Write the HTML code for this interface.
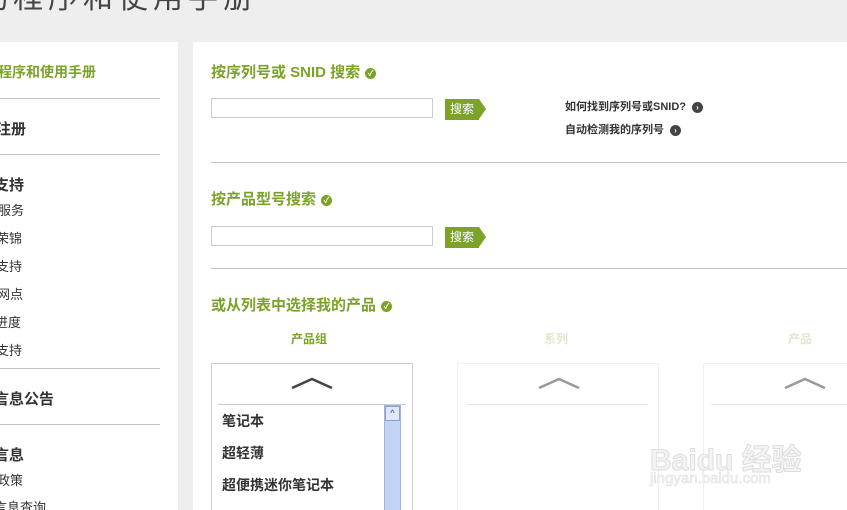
<!DOCTYPE html>
<html style="overflow:hidden;width:847px;height:510px"><head><meta charset="utf-8"><style>
*{margin:0;padding:0;box-sizing:border-box}
body{width:847px;height:510px;overflow:hidden;background:#fff;font-family:"Liberation Sans","Noto Sans CJK SC",sans-serif;position:relative}
.a{position:absolute;white-space:nowrap}
.hd{left:0;top:0;width:847px;height:42px;background:#eeeeee}
.ht{left:-22px;top:-27px;font-size:30px;color:#444;letter-spacing:5px}
.strip{left:178px;top:42px;width:15px;height:468px;background:#eeeeee}
.ln{height:1px;background:#c4c4c4}
.g{color:#7aa328;font-weight:bold}
.ck{display:inline-block;width:11px;height:11px;border-radius:50%;background:#7aa328;color:#fff;font-size:8px;line-height:11px;text-align:center;vertical-align:1px;margin-left:5px}
.dk{display:inline-block;width:11px;height:11px;border-radius:50%;background:#444;color:#fff;font-size:8px;line-height:11px;text-align:center;margin-left:6px;vertical-align:0}
.in{width:222px;height:20px;border:1px solid #ccc;background:#fff}
.btn{width:34px;height:21px;background:#7aa328;color:#fff;font-size:12px;line-height:21px;padding-left:5px}
.btn:after{content:"";position:absolute;left:34px;top:0;border-left:7px solid #7aa328;border-top:10.5px solid transparent;border-bottom:10.5px solid transparent}
.s{font-size:13px;color:#333}
.b{font-size:15px;font-weight:bold;color:#333}
.box{border:1px solid #ccc;width:202px;height:147px;border-bottom:none}
</style></head><body>
<div class="a hd"></div>
<div class="a ht">动程序和使用手册</div>
<div class="a strip"></div>

<div class="a g" style="left:-2px;top:62px;font-size:14px">程序和使用手册</div>
<div class="a ln" style="left:0;top:98px;width:160px"></div>
<div class="a b" style="left:-4px;top:118px">注册</div>
<div class="a ln" style="left:0;top:154px;width:160px"></div>
<div class="a b" style="left:-6px;top:174px">支持</div>
<div class="a s" style="left:-2px;top:200px">服务</div>
<div class="a s" style="left:-4px;top:228px">荣锦</div>
<div class="a s" style="left:-4px;top:256px">支持</div>
<div class="a s" style="left:-3px;top:284px">网点</div>
<div class="a s" style="left:-5px;top:312px">进度</div>
<div class="a s" style="left:-4px;top:340px">支持</div>
<div class="a ln" style="left:0;top:368px;width:160px"></div>
<div class="a b" style="left:-6px;top:388px">言息公告</div>
<div class="a ln" style="left:0;top:424px;width:160px"></div>
<div class="a b" style="left:-6px;top:444px">言息</div>
<div class="a s" style="left:-3px;top:470px">政策</div>
<div class="a s" style="left:-6px;top:497px">言息查询</div>

<div class="a g" style="left:211px;top:61px;font-size:15px">按序列号或 SNID 搜索<span class="ck">✓</span></div>
<div class="a in" style="left:211px;top:98px"></div>
<div class="a btn" style="left:445px;top:99px">搜索</div>
<div class="a" style="left:565px;top:98px;font-size:11px;font-weight:bold;color:#333">如何找到序列号或SNID?<span class="dk">›</span></div>
<div class="a" style="left:565px;top:121px;font-size:11px;font-weight:bold;color:#333">自动检测我的序列号<span class="dk">›</span></div>
<div class="a ln" style="left:211px;top:162px;width:636px"></div>

<div class="a g" style="left:211px;top:188px;font-size:15px">按产品型号搜索<span class="ck">✓</span></div>
<div class="a in" style="left:211px;top:226px"></div>
<div class="a btn" style="left:445px;top:227px">搜索</div>
<div class="a ln" style="left:211px;top:268px;width:636px"></div>

<div class="a g" style="left:211px;top:294px;font-size:15px">或从列表中选择我的产品<span class="ck">✓</span></div>
<div class="a g" style="left:291px;top:330px;font-size:12px">产品组</div>
<div class="a" style="left:544px;top:330px;font-size:12px;color:#dfe8cc;font-weight:bold">系列</div>
<div class="a" style="left:788px;top:330px;font-size:12px;color:#dfe8cc;font-weight:bold">产品</div>

<div class="a box" style="left:211px;top:363px"></div>
<svg class="a" style="left:290px;top:376px" width="44" height="14"><polyline points="2,12 22,3 42,12" fill="none" stroke="#444" stroke-width="2.5"/></svg>
<div class="a ln" style="left:218px;top:404px;width:188px;background:#ccc"></div>
<div class="a" style="left:384px;top:405px;width:17px;height:105px;background:#c2d3f5;border:1px solid #9fb4e0;border-bottom:none"></div>
<div class="a" style="left:385px;top:406px;width:15px;height:15px;background:#dfe8fb;border:1px solid #8aa0d0;font-size:9px;color:#335;text-align:center;line-height:13px">^</div>
<div class="a" style="left:222px;top:411px;font-size:14px;font-weight:bold;color:#333">笔记本</div>
<div class="a" style="left:222px;top:443px;font-size:14px;font-weight:bold;color:#333">超轻薄</div>
<div class="a" style="left:222px;top:475px;font-size:14px;font-weight:bold;color:#333">超便携迷你笔记本</div>

<div class="a box" style="left:457px;top:363px;border-color:#f0f0f0"></div>
<svg class="a" style="left:537px;top:376px" width="44" height="14"><polyline points="2,12 22,3 42,12" fill="none" stroke="#999" stroke-width="2.5"/></svg>
<div class="a ln" style="left:466px;top:404px;width:182px;background:#e6e6e6"></div>
<div class="a box" style="left:703px;top:363px;border-color:#f0f0f0;width:144px;border-right:none"></div>
<svg class="a" style="left:783px;top:376px" width="44" height="14"><polyline points="2,12 22,3 42,12" fill="none" stroke="#999" stroke-width="2.5"/></svg>
<div class="a ln" style="left:711px;top:404px;width:136px;background:#e6e6e6"></div>
<div class="a" style="left:650px;top:435px;font-size:30px;color:#f4f4f4;font-weight:bold;-webkit-text-stroke:1px #ddd">Bai<span>du</span> 经验</div>
<div class="a" style="left:650px;top:470px;font-size:15px;color:#f4f4f4;-webkit-text-stroke:.5px #ddd">jingyan.baidu.com</div>
</body></html>
